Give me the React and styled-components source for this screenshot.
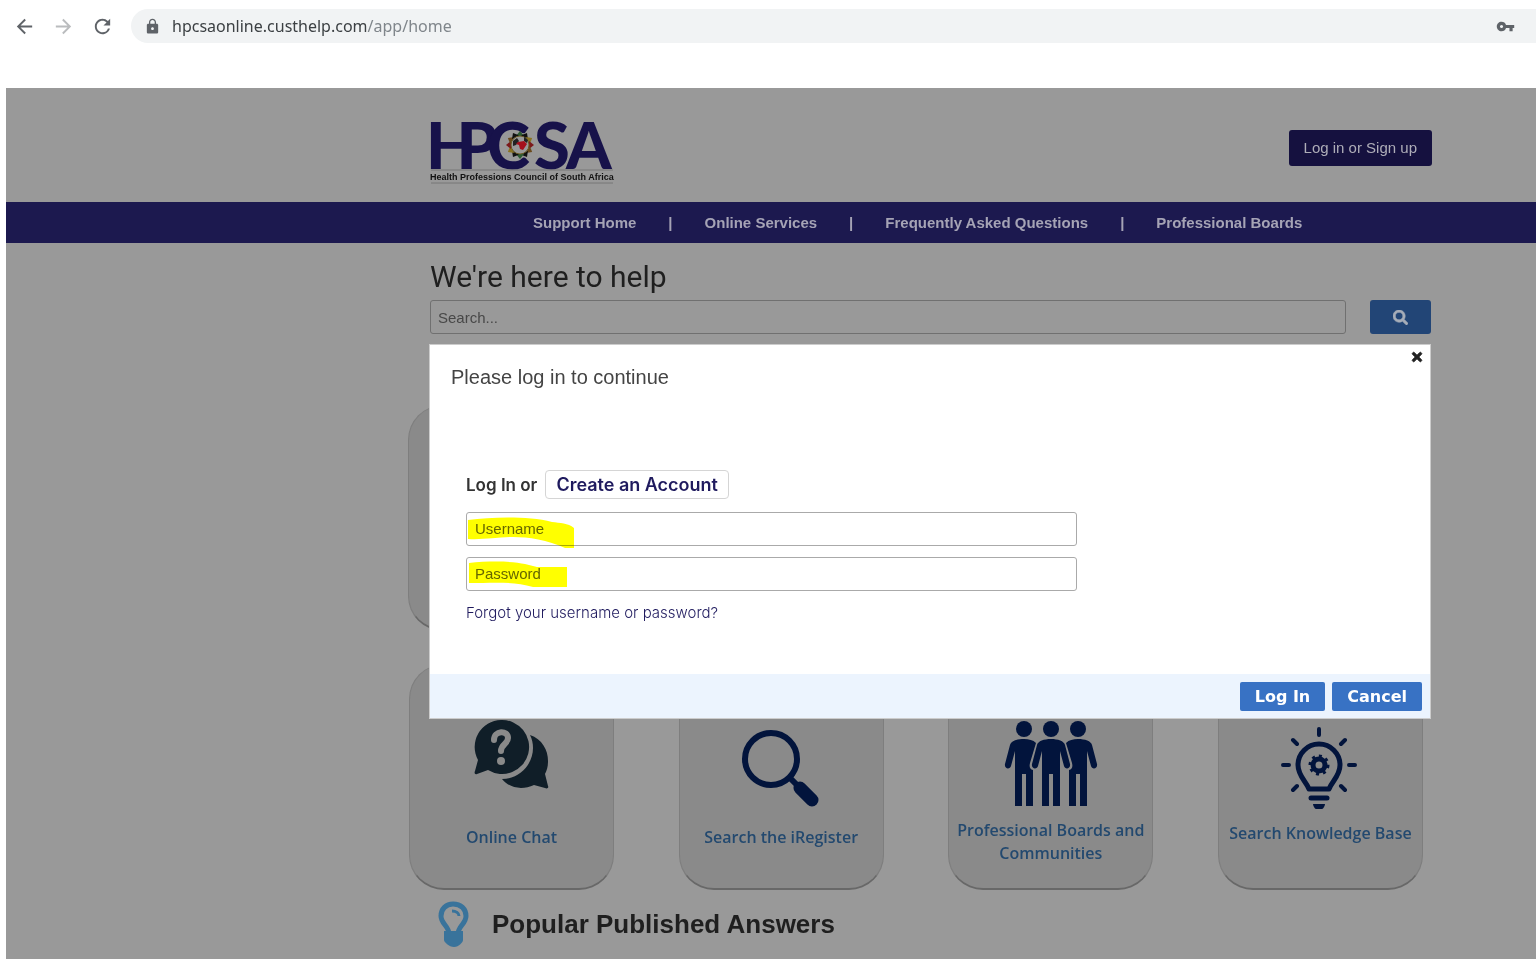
import React from "react";
import styled, { createGlobalStyle } from "styled-components";
import { MdArrowBack, MdArrowForward, MdRefresh, MdLock, MdVpnKey } from "react-icons/md";
import { FaSearch, FaTimes } from "react-icons/fa";

const GlobalStyle = createGlobalStyle`
  * {
    box-sizing: border-box;
  }
  body {
    margin: 0;
    background: #fff;
    font-family: "Liberation Sans", Arial, sans-serif;
  }
`;

const Page = styled.div`
  min-height: 100vh;
  display: flex;
  flex-direction: column;
`;
const BrowserBar = styled.div`
  display: flex;
  align-items: center;
  height: 52px;
  padding-left: 13px;
`;
const BarButton = styled.button`
  display: flex;
  margin-right: 16px;
  padding: 0;
  border: 0;
  background: none;
  color: ${(props) => (props.$faded ? "#babcbe" : "#5f6368")};
  font-size: 23px;
`;
const Address = styled.div`
  flex: 1;
  display: flex;
  align-items: center;
  height: 34px;
  margin-left: 1px;
  padding: 0 21px 0 13px;
  border-radius: 17px 0 0 17px;
  background: #f1f3f4;
  color: #5f6368;
`;
const Url = styled.span`
  flex: 1;
  margin-left: 11px;
  font: 16px "Noto Sans", sans-serif;
  color: #80868b;
`;
const Host = styled.span`
  color: #3c4043;
`;

const Site = styled.div`
  flex: 1;
  margin: 36px 0 0 6px;
  background: #999;
`;
const Header = styled.header`
  display: flex;
  align-items: center;
  justify-content: space-between;
  height: 114px;
  padding: 6px 104px 0 424px;
`;
const Logo = styled.svg`
  width: 186px;
  height: 72px;
  overflow: visible;
`;
const SignUp = styled.button`
  height: 36px;
  padding: 0 15px 2px;
  border: 0;
  border-radius: 3px;
  background: #15113f;
  color: #aeadb8;
  font: 15px "Liberation Sans", sans-serif;
`;
const Nav = styled.nav`
  display: flex;
  align-items: center;
  gap: 32px;
  height: 41px;
  padding-left: 527px;
  background: #1c194f;
  color: #a5a3b5;
  font-size: 15px;
  font-weight: bold;
  white-space: nowrap;
`;
const NavLink = styled.a`
  color: inherit;
  text-decoration: none;
`;
const Main = styled.main`
  position: relative;
  padding: 16px 105px 0 424px;
`;
const Title = styled.h1`
  margin: 0;
  font: 30px/36px Roboto, sans-serif;
  color: #1f1f1f;
`;
const SearchForm = styled.form`
  display: flex;
  gap: 24px;
  margin-top: 5px;
`;
const SearchInput = styled.input`
  flex: 1;
  height: 34px;
  padding: 0 7px;
  border: 1px solid #707070;
  border-radius: 3px;
  background: #999;
  font: 15px "Liberation Sans", sans-serif;
  &::placeholder {
    color: #484848;
  }
`;
const SearchButton = styled.button`
  display: flex;
  align-items: center;
  justify-content: center;
  width: 61px;
  height: 34px;
  border: 0;
  border-radius: 3px;
  background: #224576;
  color: #a6adb8;
`;
const Cards = styled.div`
  display: flex;
  justify-content: space-between;
  margin: ${(props) => (props.$first ? "71px 8px 0 -22px" : "33px 8px 0 -21px")};
`;
const Card = styled.a`
  display: flex;
  flex-direction: column;
  align-items: center;
  width: 205px;
  height: 226px;
  padding-top: 52px;
  border: 1px solid #7e7e7e;
  border-bottom: 2px solid #686868;
  border-radius: 35px;
  background: #8a8a8a;
  color: #23496f;
  font: 600 16px/23px "Open Sans", sans-serif;
  text-align: center;
  text-decoration: none;
`;
const CardIcon = styled.svg`
  width: 100px;
  height: 92px;
  flex: none;
  fill: ${(props) => props.$fill || "#02143c"};
`;
const CardLabel = styled.span`
  display: flex;
  align-items: center;
  justify-content: center;
  height: ${(props) => props.$height}px;
  white-space: pre-line;
`;
const Popular = styled.h2`
  display: flex;
  align-items: center;
  gap: 22px;
  margin: 10px 0 0 7px;
  font-size: 26px;
  line-height: 48px;
  color: #1f1f1f;
`;
const Bulb = styled.svg`
  width: 33px;
  height: 48px;
`;

const Dialog = styled.section`
  position: absolute;
  top: 101px;
  left: 423px;
  right: 105px;
  border: 1px solid #ccc;
  background: #fff;
`;
const Close = styled.button`
  position: absolute;
  top: 5px;
  right: 6px;
  display: flex;
  padding: 0;
  border: 0;
  background: none;
  color: #222;
`;
const DialogTitle = styled.h2`
  margin: 0;
  padding: 20px 21px 0;
  font-size: 20px;
  font-weight: normal;
  line-height: 24px;
  color: #444;
`;
const LoginForm = styled.form`
  padding: 81px 36px 51px;
`;
const Intro = styled.div`
  display: flex;
  align-items: center;
  gap: 8px;
  margin-bottom: 13px;
  font: 600 17px Inter, sans-serif;
  color: #333;
`;
const Create = styled.button`
  height: 29px;
  padding: 0 10px;
  border: 1px solid #d5d5d5;
  border-radius: 4px;
  background: #fff;
  color: #1f1a5e;
  font: 600 18px Inter, sans-serif;
`;
const Field = styled.label`
  position: relative;
  display: block;
  max-width: 611px;
  margin-bottom: 11px;
`;
const FieldInput = styled.input`
  display: block;
  width: 100%;
  height: 34px;
  padding: 0 8px 2px;
  border: 1px solid #aaa;
  border-radius: 3px;
  font: 15px "Liberation Sans", sans-serif;
  &::placeholder {
    color: #666;
  }
`;
const Marker = styled.svg`
  position: absolute;
  top: 4px;
  left: 2px;
  width: 108px;
  height: 32px;
  fill: #ff0;
  mix-blend-mode: multiply;
  pointer-events: none;
`;
const Forgot = styled.a`
  display: block;
  margin-top: 12px;
  font: 300 15px/20px Inter, sans-serif;
  color: #1f1a5e;
  text-decoration: none;
`;
const DialogFooter = styled.footer`
  display: flex;
  justify-content: flex-end;
  gap: 7px;
  padding: 8px 8px 7px;
  background: #ecf4fe;
`;
const Action = styled.button`
  height: 29px;
  padding: 0 15px;
  border: 0;
  border-radius: 2px;
  background: #3872c4;
  color: #fff;
  font: bold 16px "DejaVu Sans", sans-serif;
`;

const navItems = ["Support Home", "Online Services", "Frequently Asked Questions", "Professional Boards"];

const ChatIcon = () => (
  <CardIcon viewBox="0 0 100 92" $fill="#101e28">
    <path d="M68 18C80 22 86 33 86 44c0 6-1 9-3 13l3 12c1 2-1 3-3 2l-11-3c-11 5-24 4-32-6 18 0 31-15 31-31 0-5-1-9-3-13z" />
    <path d="M39 3a27 27 0 1 1-13 50l-11 4c-2 1-3-1-2-3l3-11A27 27 0 0 1 39 3z" />
    <path d="M32 23c0-10 14-10 14-2 0 6-7 6-7 13" fill="none" stroke="#8a8a8a" strokeWidth="6" strokeLinecap="round" />
    <circle cx="39" cy="44" r="4" fill="#8a8a8a" />
  </CardIcon>
);

const MagnifierIcon = () => (
  <CardIcon viewBox="0 0 100 92">
    <circle cx="40" cy="42" r="26" fill="none" stroke="#02143c" strokeWidth="6" />
    <path d="M59 61l7 7" stroke="#02143c" strokeWidth="6" />
    <path d="M69 71l12 12" stroke="#02143c" strokeWidth="13" strokeLinecap="round" />
  </CardIcon>
);

const PeopleIcon = () => (
  <CardIcon viewBox="0 0 100 92">
    <circle cx="23" cy="12" r="8" />
    <circle cx="50" cy="12" r="8" />
    <circle cx="77" cy="12" r="8" />
    <path d="M14 89V34l-4 15c-1 4-7 3-6-2l5-19c1-4 7-6 14-6 5 0 9 1 12 4l-6 20c-1 4 0 6 3 7v36h-7V57h-4v32z" />
    <path d="M86 89V34l4 15c1 4 7 3 6-2l-5-19c-1-4-7-6-14-6-5 0-9 1-12 4l6 20c1 4 0 6-3 7v36h7V57h4v32z" />
    <path d="M41 89V34l-4 15c-1 4-7 3-6-2l5-19c1-4 7-6 14-6s13 2 14 6l5 19c1 5-5 6-6 2l-4-15v55h-7V57h-4v32z" />
  </CardIcon>
);

const IdeaIcon = () => (
  <CardIcon viewBox="0 0 100 92">
    <g fill="none" stroke="#02143c" strokeWidth="5" strokeLinecap="round" strokeLinejoin="round">
      <path d="M39 72c-3-8-11-13-11-24a21 21 0 0 1 42 0c0 11-8 16-11 24z" />
      <path d="M49 12v6M23 23l4 4M75 23l-4 4M13 48h6M79 48h6M23 73l4-4M75 73l-4-4" strokeWidth="4" />
      <path d="M41 81h16" />
      <circle cx="49" cy="48" r="6" />
      <circle cx="49" cy="48" r="9" strokeWidth="3" strokeDasharray="3 4" strokeLinecap="butt" />
    </g>
    <path d="M43 87h12c-1 8-11 8-12 0z" />
  </CardIcon>
);

const cards = [
  { label: "Online Chat", Icon: ChatIcon, labelHeight: 56 },
  { label: "Search the iRegister", Icon: MagnifierIcon, labelHeight: 56 },
  { label: "Professional Boards and\nCommunities", Icon: PeopleIcon, labelHeight: 66 },
  { label: "Search Knowledge Base", Icon: IdeaIcon, labelHeight: 48 },
];

const rays = ["#2c5c33", "#111", "#8a7420", "#7c1a1c", "#6b4a1c", "#111"];

const HpcsaLogo = () => (
  <Logo viewBox="0 0 186 72" role="img" aria-label="HPCSA">
    <g fill="#17124a" fontFamily="Lato" fontWeight="900" fontSize="65">
      <text x="-4 27 57 104 136" y="57">HPCSA</text>
    </g>
    <circle cx="90" cy="33" r="12" fill="#999" />
    {Array.from({ length: 12 }, (_, i) => (
      <path key={i} d="M86 24l4-5 4 5z" fill={rays[i % 6]} transform={`rotate(${i * 30} 90 33)`} />
    ))}
    <circle cx="90" cy="33" r="9" fill="none" stroke="#6b5a24" />
    <path d="M83 29l4-3 2 3-3 4-3 1zM94 25l4 3-1 3-3-2z" fill="#222" />
    <path d="M88 30l6-1 3 3-4 6-3-1-1-4-3-1z" fill="#a5101c" />
    <path d="M1 58h182M1 71h182" stroke="#777" />
    <text x="0" y="68" fontFamily="Liberation Sans" fontWeight="bold" fontSize="9" fill="#111">
      Health Professions Council of South Africa
    </text>
  </Logo>
);

const App = () => {
  return (
    <Page>
      <GlobalStyle />
      <BrowserBar>
        <BarButton aria-label="Back"><MdArrowBack /></BarButton>
        <BarButton aria-label="Forward" $faded><MdArrowForward /></BarButton>
        <BarButton aria-label="Reload"><MdRefresh /></BarButton>
        <Address>
          <MdLock size={17} />
          <Url><Host>hpcsaonline.custhelp.com</Host>/app/home</Url>
          <MdVpnKey size={19} />
        </Address>
      </BrowserBar>
      <Site>
        <Header>
          <HpcsaLogo />
          <SignUp>Log in or Sign up</SignUp>
        </Header>
        <Nav>
          {navItems.map((item, i) => (
            <React.Fragment key={item}>
              {i > 0 && <span>|</span>}
              <NavLink href="#">{item}</NavLink>
            </React.Fragment>
          ))}
        </Nav>
        <Main>
          <Title>We're here to help</Title>
          <SearchForm>
            <SearchInput aria-label="Search" placeholder="Search..." />
            <SearchButton type="button" aria-label="Search">
              <FaSearch size={15} stroke="currentColor" strokeWidth={20} />
            </SearchButton>
          </SearchForm>
          <Cards $first>
            <Card as="div" />
          </Cards>
          <Cards>
            {cards.map(({ label, Icon, labelHeight }) => (
              <Card href="#" key={label}>
                <Icon />
                <CardLabel $height={labelHeight}>{label}</CardLabel>
              </Card>
            ))}
          </Cards>
          <Popular>
            <Bulb viewBox="0 0 33 48">
              <path d="M16 4c8 0 13 5 13 12 0 8-8 10-8 18H12C12 26 4 24 4 16 4 9 9 4 16 4z" fill="none" stroke="#39739b" strokeWidth="5" />
              <path d="M7 31h19v9c0 2-4 7-9 7s-10-5-10-7z" fill="#39739b" />
              <path d="M15 11c4 0 7 2 7 5" fill="none" stroke="#39739b" strokeWidth="3" />
            </Bulb>
            Popular Published Answers
          </Popular>
          <Dialog role="dialog" aria-labelledby="login-title">
            <Close aria-label="Close">
              <FaTimes size={14} stroke="currentColor" strokeWidth={30} />
            </Close>
            <DialogTitle id="login-title">Please log in to continue</DialogTitle>
            <LoginForm>
              <Intro>
                Log In or <Create type="button">Create an Account</Create>
              </Intro>
              <Field>
                <FieldInput aria-label="Username" placeholder="Username" />
                <Marker viewBox="0 0 108 32">
                  <path d="M0 4C25 1 60 0 84 6c8 1 16 1 22 6v20H97C80 24 60 21 45 21 30 21 15 24 0 23z" />
                </Marker>
              </Field>
              <Field>
                <FieldInput type="password" aria-label="Password" placeholder="Password" />
                <Marker viewBox="0 0 108 32">
                  <path d="M1 2C20 0 45 0 57 3l12 3h30v20H65C45 20 25 22 1 22z" />
                </Marker>
              </Field>
              <Forgot href="#">Forgot your username or password?</Forgot>
            </LoginForm>
            <DialogFooter>
              <Action>Log In</Action>
              <Action>Cancel</Action>
            </DialogFooter>
          </Dialog>
        </Main>
      </Site>
    </Page>
  );
};

export default App;
